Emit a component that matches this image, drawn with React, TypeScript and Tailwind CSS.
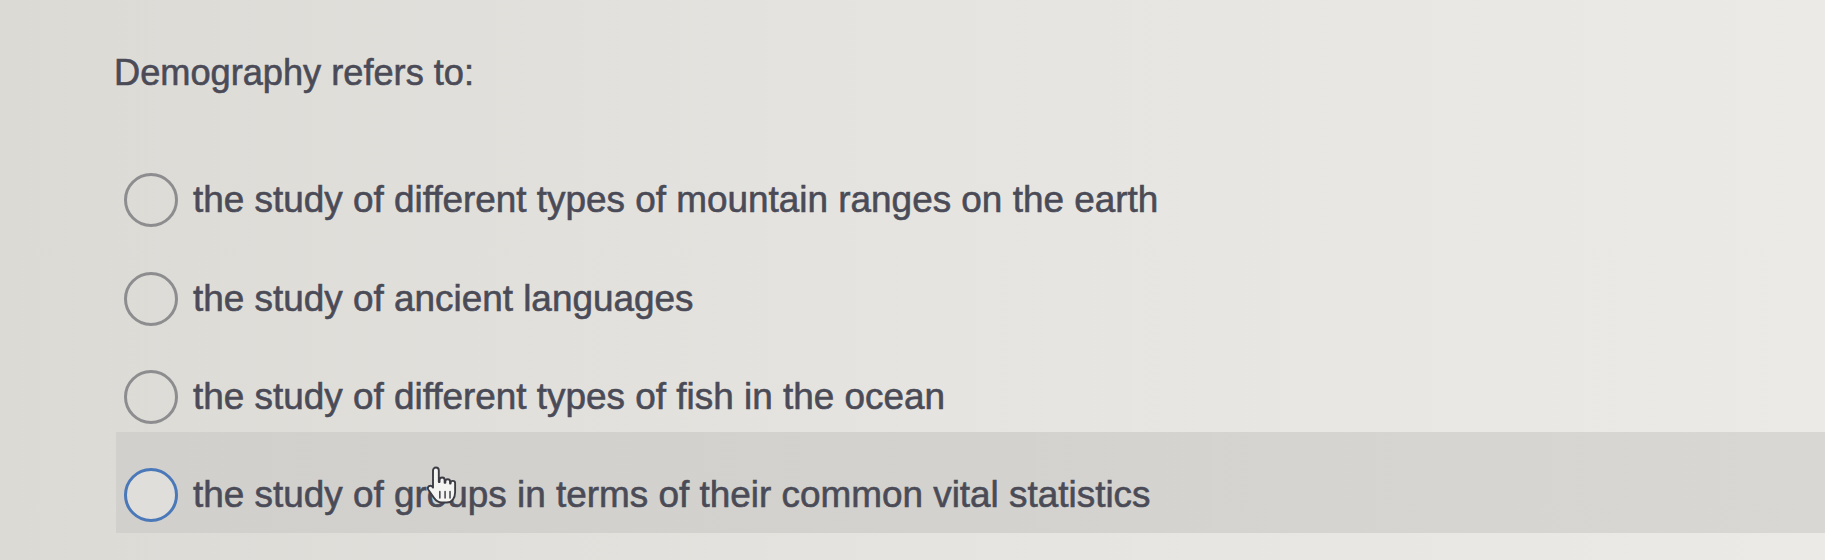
const options = [
  { text: "the study of different types of mountain ranges on the earth", mt: "mt-[82px]" },
  { text: "the study of ancient languages", mt: "mt-[45px]" },
  { text: "the study of different types of fish in the ocean", mt: "mt-[44px]" },
];

function Radio({ active }: { active?: boolean }) {
  return (
    <span
      className={
        active
          ? "block w-[54px] h-[54px] shrink-0 rounded-full border-[3.5px] border-[#4a78b8] bg-[#dfdedb]"
          : "block w-[54px] h-[54px] shrink-0 rounded-full border-[3px] border-[#8d8d8f]"
      }
    />
  );
}

function HandCursor() {
  return (
    <svg className="absolute left-[425px] top-[463px] w-[32px] h-[44px]" viewBox="0 0 22 28" fill="none">
      <path
        d="M7.5 2C8.6 2 9.5 2.9 9.5 4V12H10V10.5C10 9.4 10.9 8.8 11.8 8.8C12.7 8.8 13.5 9.5 13.5 10.5V12.5H14V11.5C14 10.6 14.8 10 15.6 10C16.5 10 17.2 10.7 17.2 11.6V13H17.6V12.6C17.6 11.8 18.3 11.2 19.1 11.2C20 11.2 20.7 11.9 20.7 12.8V19C20.7 23 18.5 26 15 26H11.5C9 26 7.6 24.8 6.3 23L2.3 17.3C1.7 16.4 1.9 15.3 2.7 14.8C3.5 14.3 4.6 14.5 5.2 15.3L5.5 15.8V4C5.5 2.9 6.4 2 7.5 2Z"
        fill="#f4f4f2"
        stroke="#3c3c44"
        strokeWidth="1.3"
        strokeLinejoin="round"
      />
      <path d="M10.2 18.5V23M13.8 18.5V23M17.2 18.5V23" stroke="#3c3c44" strokeWidth="1" strokeLinecap="round" />
    </svg>
  );
}

export default function App() {
  return (
    <div className="relative w-full h-[560px] overflow-hidden bg-linear-to-r from-[#dcdad5] via-[#e6e4e0] to-[#eceae6] text-[#4a4b57] font-['Liberation_Sans',Arial,sans-serif] [-webkit-text-stroke:0.6px_#4a4b57]">
      <h1 className="pt-[55px] pl-[114px] text-[36.2px] leading-none font-normal">Demography refers to:</h1>

      <div className="flex flex-col">
        {options.map((o) => (
          <label key={o.text} className={`${o.mt} flex items-center h-[54px] pl-[124px] gap-[15px] text-[36.9px] leading-none`}>
            <Radio />
            <span>{o.text}</span>
          </label>
        ))}

        <div className="mt-[8px] ml-[116px] pt-[36px] pb-[11px] pl-[8px] bg-linear-to-r from-[#d1d0cc] via-[#d3d2ce] to-[#d8d7d3]">
          <label className="flex items-center h-[54px] gap-[15px] text-[36.9px] leading-none">
            <Radio active />
            <span>the study of groups in terms of their common vital statistics</span>
          </label>
        </div>
      </div>

      <HandCursor />
    </div>
  );
}
